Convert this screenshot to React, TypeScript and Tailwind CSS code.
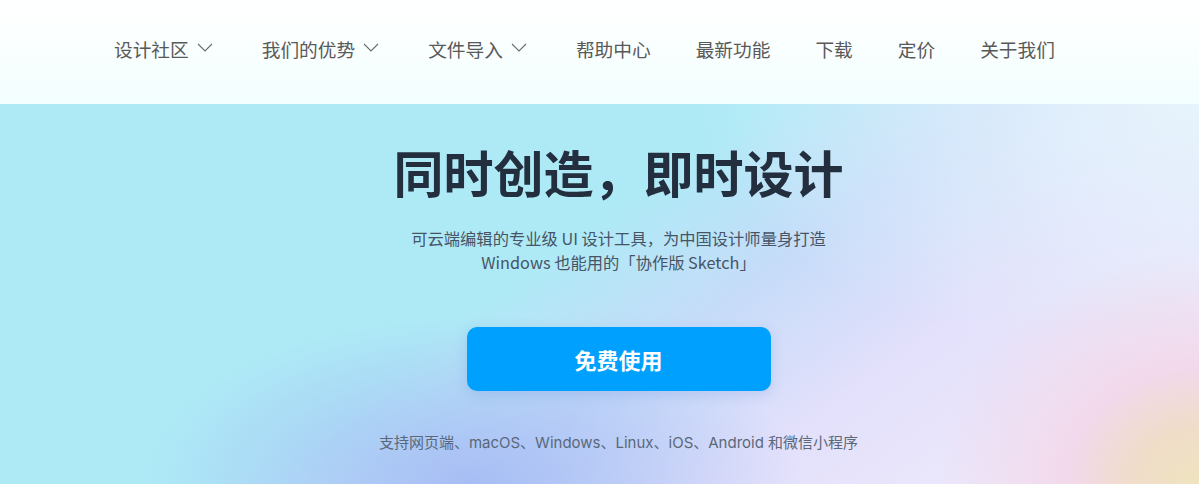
const navItems = [
  { label: "设计社区", dropdown: true },
  { label: "我们的优势", dropdown: true },
  { label: "文件导入", dropdown: true },
  { label: "帮助中心" },
  { label: "最新功能" },
  { label: "下载" },
  { label: "定价" },
  { label: "关于我们" },
]

function Chevron() {
  return (
    <svg width="16" height="9" viewBox="0 0 16 9" fill="none" className="ml-2 mt-[-2px]">
      <path d="M1 1L8 8L15 1" stroke="#6b6b6b" strokeWidth="1.1" />
    </svg>
  )
}

export default function App() {
  return (
    <div className="w-[1199px] h-[484px] overflow-hidden font-['Noto_Sans_CJK_SC',sans-serif]">
      {/* Header */}
      <header className="h-[104px] bg-[linear-gradient(180deg,#ffffff_0%,#f3fefe_100%)] flex items-center pb-[6px]">
        <nav className="flex items-center pl-[114px]">
          {navItems.map((item, i) => (
            <a
              key={i}
              className={`flex items-center text-[18.7px] text-[#595959] ${i < navItems.length - 1 ? (item.dropdown ? "mr-[49px]" : "mr-[45px]") : ""}`}
            >
              {item.label}
              {item.dropdown && <Chevron />}
            </a>
          ))}
        </nav>
      </header>

      {/* Hero */}
      <section className="h-[380px] bg-[#aeeaf6] bg-[radial-gradient(ellipse_260px_230px_at_100%_100%,#efe3bf_0%,#f0ddc9_25%,rgba(243,214,232,0.85)_50%,transparent_100%),radial-gradient(ellipse_330px_170px_at_470px_100%,rgba(165,188,244,0.95)_0%,transparent_100%),radial-gradient(ellipse_500px_260px_at_100%_0%,#e6f4fc_0%,transparent_100%),linear-gradient(144deg,#aeeaf6_44%,#c6dcf9_58%,#e2e0fb_72%,#eee9fb_90%)] pl-[38px] pt-[32px] flex flex-col items-center">
        <h1 className="text-[50px] leading-[70px] font-bold text-[#232f3f]">同时创造，即时设计</h1>
        <p className="mt-[20px] text-[16.3px] leading-[24px] text-[#475466] text-center">
          可云端编辑的专业级 UI 设计工具，为中国设计师量身打造
          <br />
          Windows 也能用的「协作版 Sketch」
        </p>
        <button className="mt-[53px] w-[304px] h-[64px] rounded-[10px] bg-[#00a0fe] text-white text-[22px] font-bold shadow-[0_4px_14px_rgba(60,110,200,0.18)]">
          免费使用
        </button>
        <p className="mt-[42px] text-[15px] leading-[20px] text-[#5a6879] font-['Inter','Noto_Sans_CJK_SC',sans-serif]">
          支持网页端、macOS、Windows、Linux、iOS、Android 和微信小程序
        </p>
      </section>
    </div>
  )
}
